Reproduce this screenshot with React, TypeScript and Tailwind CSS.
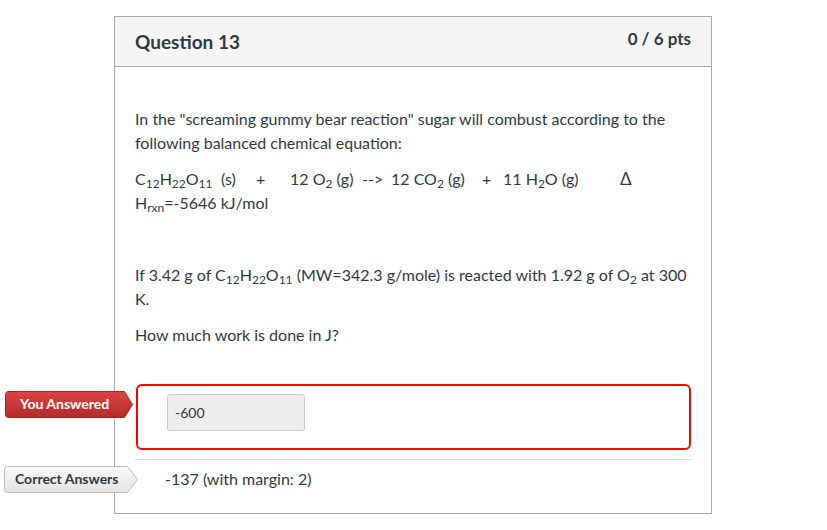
import React from "react";

function Tag({ label, variant }: { label: string; variant: "red" | "gray" }) {
  const red = variant === "red";
  const w = red ? 128 : 134;
  const h = 27;
  const tip = red ? 8 : 10;
  const id = red ? "gradRed" : "gradGray";
  return (
    <div className={red ? "relative w-[128px] h-[27px]" : "relative w-[134px] h-[27px]"}>
      <svg width={w} height={h} className="absolute inset-0" viewBox={`0 0 ${w} ${h}`}>
        <defs>
          <linearGradient id={id} x1="0" y1="0" x2="0" y2="1">
            {red ? (
              <>
                <stop offset="0" stopColor="#dc4442" />
                <stop offset="1" stopColor="#b52a2a" />
              </>
            ) : (
              <>
                <stop offset="0" stopColor="#fafafa" />
                <stop offset="1" stopColor="#e2e2e2" />
              </>
            )}
          </linearGradient>
        </defs>
        <path
          d={`M3.5 0.5 H${w - tip - 0.5} L${w - 0.5} ${h / 2} L${w - tip - 0.5} ${h - 0.5} H3.5 Q0.5 ${h - 0.5} 0.5 ${h - 3.5} V3.5 Q0.5 0.5 3.5 0.5 Z`}
          fill={`url(#${id})`}
          stroke={red ? "#a82525" : "#bdbdbd"}
          strokeWidth="1"
        />
      </svg>
      <div
        className={
          red
            ? "relative h-full flex items-center pl-[15px] pb-[3px] text-[14px] font-bold text-white"
            : "relative h-full flex items-center pl-[11px] pb-[3px] text-[14px] font-bold text-[#2d3b45]"
        }
      >
        {label}
      </div>
    </div>
  );
}

export default function App() {
  return (
    <div className="relative w-[827px] h-[530px] bg-white pt-[16px] pl-[114px] font-['Lato','Noto_Sans',sans-serif] text-[#2d3b45]">
      <div className="w-[598px] h-[498px] border border-[#aaaaaa] bg-white">
        <div className="h-[50px] bg-[#f5f5f5] border-b border-[#aaaaaa] flex items-center justify-between px-5 pt-[2px]">
          <div className="text-[19px] font-bold">Question 13</div>
          <div className="text-[17px] font-bold -mt-[8px]">0 / 6 pts</div>
        </div>
        <div className="px-5 pt-[40px] text-[16px] leading-[24px]">
          <p className="mb-3 whitespace-nowrap">
            In the "screaming gummy bear reaction" sugar will combust according to the
            <br />
            following balanced chemical equation:
          </p>
          <p className="mb-3 whitespace-nowrap">
            <span className="inline-block w-[86px]">
              C<sub className="text-[12px]">12</sub>H<sub className="text-[12px]">22</sub>O
              <sub className="text-[12px]">11</sub>
            </span>
            <span className="inline-block w-[35px]">(s)</span>
            <span className="inline-block w-[34px]">+</span>
            <span className="inline-block w-[72px]">
              12 O<sub className="text-[12px]">2</sub> (g)
            </span>
            <span className="inline-block w-[29px]">--&gt;</span>
            <span className="inline-block w-[91px]">
              12 CO<sub className="text-[12px]">2</sub> (g)
            </span>
            <span className="inline-block w-[21px]">+</span>
            <span className="inline-block w-[117px]">
              11 H<sub className="text-[12px]">2</sub>O (g)
            </span>
            <span className="inline-block text-[17px]">Δ</span>
            <br />
            H<sub className="text-[12px]">rxn</sub>=-5646 kJ/mol
          </p>
          <p className="mb-3">&nbsp;</p>
          <p className="mb-3 whitespace-nowrap">
            If 3.42 g of C<sub className="text-[12px]">12</sub>H<sub className="text-[12px]">22</sub>O
            <sub className="text-[12px]">11</sub> (MW=342.3 g/mole) is reacted with 1.92 g of O
            <sub className="text-[12px]">2</sub> at 300
            <br />
            K.
          </p>
          <p className="mb-3">How much work is done in J?</p>

          <div className="mt-[37px] ml-px w-[555px] h-[66px] border-2 border-[#ff0000] rounded-[6px] pl-[29px] pt-[8px]">
            <div className="w-[138px] h-[37px] bg-[#eeeeee] border border-[#cccccc] rounded-[3px] flex items-center pl-[7px] text-[14px]">
              -600
            </div>
          </div>
          <div className="mt-[9px] w-[556px] border-t border-[#dddddd] pl-[30px] pt-[7px] text-[16px] leading-[24px]">
            -137 (with margin: 2)
          </div>
        </div>
      </div>

      <div className="absolute left-[5px] top-[391px]">
        <Tag label="You Answered" variant="red" />
      </div>
      <div className="absolute left-[4px] top-[466px]">
        <Tag label="Correct Answers" variant="gray" />
      </div>
    </div>
  );
}
